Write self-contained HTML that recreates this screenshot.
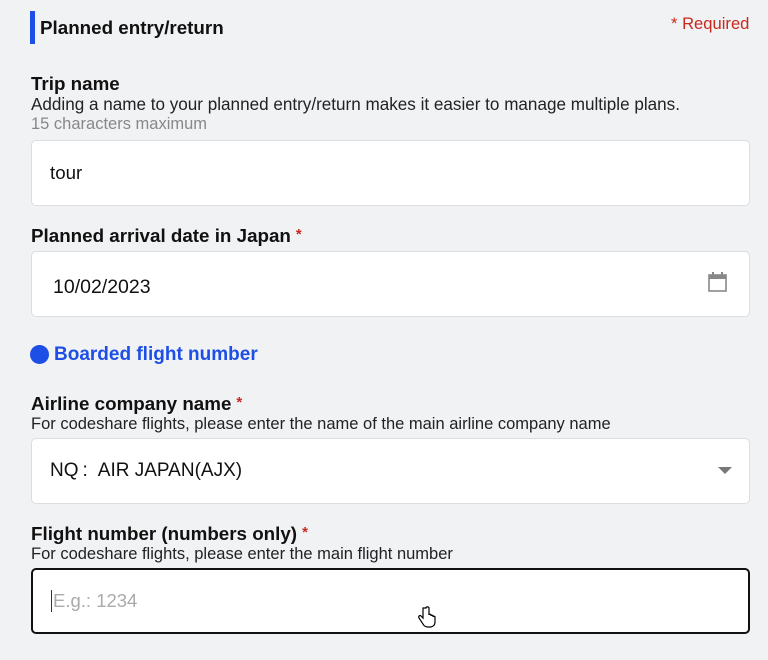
<!DOCTYPE html>
<html><head><meta charset="utf-8"><style>
body{margin:0;width:768px;height:660px;background:#f1f2f4;font-family:"Liberation Sans",Arial,sans-serif;position:relative;overflow:hidden;color:#111}
.a{position:absolute;white-space:nowrap}
.lbl{font-size:18.8px;font-weight:bold}
.d{font-size:16.5px;color:#222}
.box{position:absolute;left:31px;width:719px;height:66px;background:#fff;border:1px solid #dcdde0;border-radius:5px;box-sizing:border-box}
.star{color:#c8281e;font-size:15px;vertical-align:3px;margin-left:5px}
.val{font-size:18.7px;color:#111}
</style></head><body>
<div class="a" style="left:30px;top:11px;width:5px;height:33px;background:#1d4ee6"></div>
<div class="a lbl" style="left:40px;top:17px">Planned entry/return</div>
<div class="a" style="left:671px;top:14px;font-size:16.6px;color:#c8281e">* Required</div>

<div class="a lbl" style="left:31px;top:73px">Trip name</div>
<div class="a d" style="left:31px;top:95px;font-size:17.1px">Adding a name to your planned entry/return makes it easier to manage multiple plans.</div>
<div class="a d" style="left:31px;top:115px;color:#888">15 characters maximum</div>
<div class="box" style="top:140px"></div>
<div class="a val" style="left:50px;top:162px">tour</div>

<div class="a lbl" style="left:31px;top:225px">Planned arrival date in Japan<span class="star">*</span></div>
<div class="box" style="top:251px"></div>
<div class="a val" style="left:53px;top:276px;font-size:19.5px">10/02/2023</div>
<svg class="a" style="left:707px;top:271px" width="22" height="23" viewBox="0 0 22 23"><rect x="2" y="4" width="17" height="16" fill="none" stroke="#888" stroke-width="1.6"/><rect x="2" y="4" width="17" height="4" fill="#888"/><rect x="5" y="1" width="2" height="4" fill="#888"/><rect x="14" y="1" width="2" height="4" fill="#888"/></svg>

<div class="a" style="left:30px;top:345px;width:19px;height:19px;border-radius:50%;background:#1d4ee6"></div>
<div class="a lbl" style="left:54px;top:344px;color:#1d4ee6;font-size:19px">Boarded flight number</div>

<div class="a lbl" style="left:31px;top:393px">Airline company name<span class="star">*</span></div>
<div class="a d" style="left:31px;top:415px">For codeshare flights, please enter the name of the main airline company name</div>
<div class="box" style="top:438px"></div>
<div class="a val" style="left:50px;top:460px;font-size:19px">NQ<span style="margin:0 10px 0 4px">:</span>AIR JAPAN(AJX)</div>
<div class="a" style="left:718px;top:467px;width:0;height:0;border-left:7px solid transparent;border-right:7px solid transparent;border-top:7px solid #777"></div>

<div class="a lbl" style="left:31px;top:523px">Flight number (numbers only)<span class="star">*</span></div>
<div class="a d" style="left:31px;top:545px">For codeshare flights, please enter the main flight number</div>
<div class="box" style="top:568px;border:2px solid #111"></div>
<div class="a" style="left:51px;top:590px;width:1px;height:22px;background:#333"></div>
<div class="a val" style="left:53px;top:590px;color:#aaa;font-size:18.5px">E.g.: 1234</div>
<svg class="a" style="left:418px;top:606px" width="20" height="22" viewBox="0 0 20 22"><path d="M5 2v10l-2-2c-1-1-3 0-2 2l4 6c1 2 3 3 5 3h2c3 0 5-2 5-5v-5c0-1-2-1-2 0v-1c0-1-2-1-2 0v-1c0-1-2-1-2 0V2c0-1.5-3-1.5-3 0z" fill="#fff" stroke="#000" stroke-width="1.2"/></svg>
</body></html>
